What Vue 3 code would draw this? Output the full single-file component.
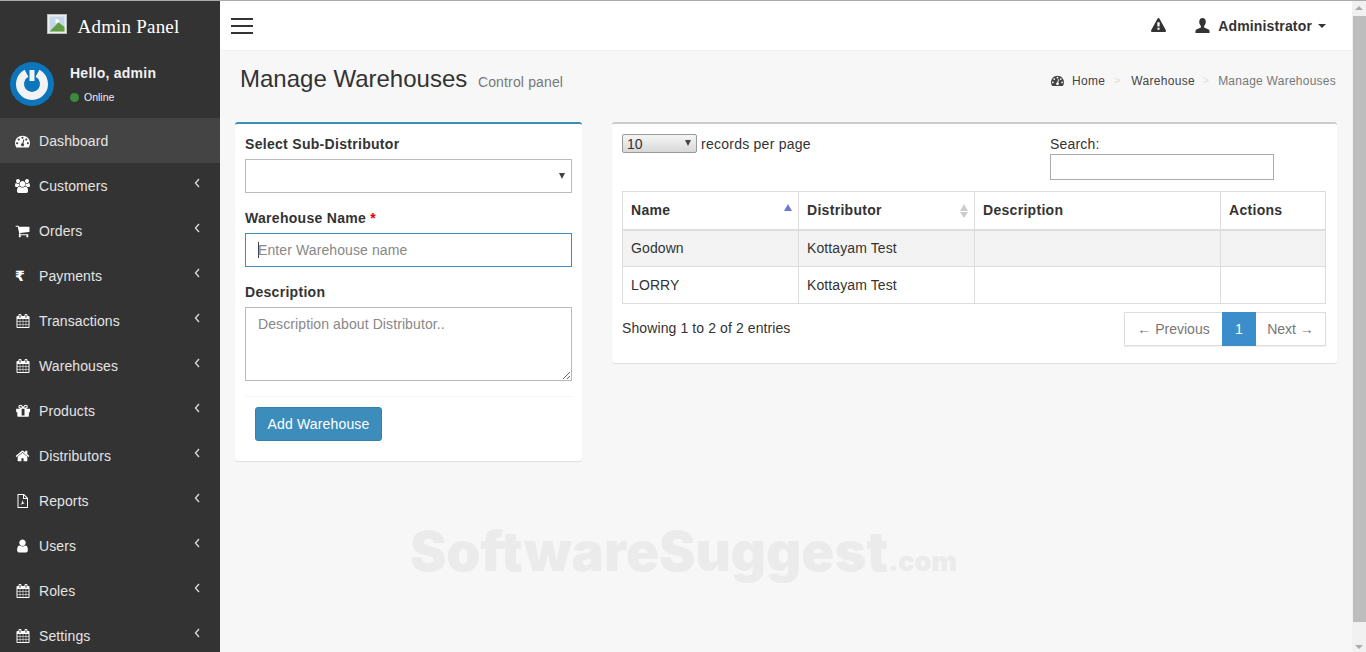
<template>
  <div class="page">
    <aside class="sidebar">
      <div class="brand">
        <svg class="broken-img" width="20" height="20" viewBox="0 0 20 20">
          <rect x="0.5" y="0.5" width="19" height="19" fill="#eee" stroke="#bbb" />
          <rect x="2.500" y="2.500" width="15" height="15" fill="#c5d6ea" />
          <path d="M2.500 17.500l9-9 6 4.500v4.500z" fill="#5f9e3d" />
          <path d="M3 7h6l-1-2h2l3 2-3 2H8l1-2z" fill="#fff" />
        </svg>
        <span class="brand-text">Admin Panel</span>
      </div>
      <div class="user-panel">
        <svg width="44" height="44" viewBox="0 0 44 44">
          <circle cx="22" cy="22" r="22" fill="#0b76bb" />
          <path d="M16.500 11.300a12 12 0 1 0 11 0" fill="none" stroke="#f2f2f2" stroke-width="8" />
          <path d="M22 8v11" stroke="#f2f2f2" stroke-width="5" />
        </svg>
        <div class="user-info">
          <div class="hello">Hello, admin</div>
          <div class="online"><i class="dot"></i>Online</div>
        </div>
      </div>
      <ul class="menu">
        <li v-for="item in menu" :key="item.label" :class="{ active: item.active }">
          <span v-if="item.icon === 'rupee'" class="rupee">₹</span>
          <svg v-else class="icon" :viewBox="icons[item.icon].box" width="14" height="14">
            <path :d="icons[item.icon].d" fill="#fff" />
          </svg>
          <span class="label">{{ item.label }}</span>
          <svg v-if="!item.active" class="angle" width="6" height="10" viewBox="0 0 6 10">
            <path d="M5 1L1.500 5 5 9" fill="none" stroke="#d8d8d8" stroke-width="1.400" />
          </svg>
        </li>
      </ul>
    </aside>

    <main class="main">
      <header class="topbar">
        <div class="burger"><i></i><i></i><i></i></div>
        <div class="top-right">
          <svg width="15" height="15" :viewBox="icons.warning.box">
            <path :d="icons.warning.d" fill="#333" />
          </svg>
          <div class="account">
            <svg width="15" height="15" viewBox="0 0 15 16">
              <path d="M7.500 0c2.200 0 3.500 1.800 3.500 4s-1 3.500-1.800 4.500v1.500l4.300 2c.8.400 1.500 1 1.500 2v2H0v-2c0-1 .7-1.600 1.500-2l4.300-2V8.500C5 7.500 4 6.200 4 4s1.300-4 3.500-4z" fill="#333" />
            </svg>
            <b>Administrator</b>
            <i class="caret"></i>
          </div>
        </div>
      </header>

      <div class="content-header">
        <h1>Manage Warehouses <small>Control panel</small></h1>
        <ol class="breadcrumb">
          <li class="home">
            <svg width="13" height="13" :viewBox="icons.dashboard.box">
              <path :d="icons.dashboard.d" fill="#444" />
            </svg>
            Home
          </li>
          <li class="sep">&gt;</li>
          <li class="middle">Warehouse</li>
          <li class="sep">&gt;</li>
          <li class="current">Manage Warehouses</li>
        </ol>
      </div>

      <section class="row">
        <div class="box box-form">
          <label class="field-label">Select Sub-Distributor</label>
          <div class="select-wrap">
            <select class="control"><option></option></select>
          </div>
          <label class="field-label">Warehouse Name <span class="req">*</span></label>
          <div class="input-wrap">
            <input class="control focused" type="text" placeholder="Enter Warehouse name" />
            <i class="text-caret"></i>
          </div>
          <label class="field-label">Description</label>
          <textarea class="control area" placeholder="Description about Distributor.."></textarea>
          <div class="box-footer">
            <button class="btn-add">Add Warehouse</button>
          </div>
        </div>

        <div class="box box-table">
          <div class="table-tools">
            <div class="per-page">
              <div class="select-wrap small-select">
                <select class="page-size"><option>10</option></select>
              </div>
              <span>records per page</span>
            </div>
            <label class="search">
              <span>Search:</span>
              <input type="text" />
            </label>
          </div>
          <table>
            <thead>
              <tr>
                <th class="c1">Name<i class="sort up"></i></th>
                <th class="c2">Distributor<i class="sort both"></i></th>
                <th class="c3">Description</th>
                <th class="c4">Actions</th>
              </tr>
            </thead>
            <tbody>
              <tr v-for="row in rows" :key="row.name">
                <td>{{ row.name }}</td>
                <td>{{ row.distributor }}</td>
                <td></td>
                <td></td>
              </tr>
            </tbody>
          </table>
          <div class="table-foot">
            <span>Showing 1 to 2 of 2 entries</span>
            <div class="pager">
              <a class="prev">← Previous</a>
              <a class="on">1</a>
              <a class="next">Next →</a>
            </div>
          </div>
        </div>
      </section>

      <div class="watermark">SoftwareSuggest<span>.com</span></div>
    </main>

    <div class="scrollbar">
      <i class="arrow top"></i>
      <div class="thumb"></div>
      <i class="arrow bottom"></i>
    </div>
  </div>
</template>

<script setup>
const calendar = 'calendar'

const menu = [
  { label: 'Dashboard', icon: 'dashboard', active: true },
  { label: 'Customers', icon: 'users' },
  { label: 'Orders', icon: 'cart' },
  { label: 'Payments', icon: 'rupee' },
  { label: 'Transactions', icon: calendar },
  { label: 'Warehouses', icon: calendar },
  { label: 'Products', icon: 'gift' },
  { label: 'Distributors', icon: 'home' },
  { label: 'Reports', icon: 'pdf' },
  { label: 'Users', icon: 'user' },
  { label: 'Roles', icon: calendar },
  { label: 'Settings', icon: calendar },
]

const rows = [
  { name: 'Godown', distributor: 'Kottayam Test' },
  { name: 'LORRY', distributor: 'Kottayam Test' },
]

const icons = {
  dashboard: {
    box: '0 128 1792 1536',
    d: 'M384 1152q0-53-37.5-90.5t-90.5-37.5-90.5 37.5-37.5 90.5 37.5 90.5 90.5 37.5 90.5-37.5 37.5-90.5zm192-448q0-53-37.5-90.5t-90.5-37.5-90.5 37.5-37.5 90.5 37.5 90.5 90.5 37.5 90.5-37.5 37.5-90.5zm428 481l101-382q6-26-7.5-48.5t-38.5-29.5-48 6.5-30 39.5l-101 382q-60 5-107 43.5t-63 98.5q-20 77 20 146t117 89 146-20 89-117q16-60-6-117t-72-91zm660-33q0-53-37.5-90.5t-90.5-37.5-90.5 37.5-37.5 90.5 37.5 90.5 90.5 37.5 90.5-37.5 37.5-90.5zm-640-640q0-53-37.5-90.5t-90.5-37.5-90.5 37.5-37.5 90.5 37.5 90.5 90.5 37.5 90.5-37.5 37.5-90.5zm448 192q0-53-37.5-90.5t-90.5-37.5-90.5 37.5-37.5 90.5 37.5 90.5 90.5 37.5 90.5-37.5 37.5-90.5zm320 448q0 261-141 483-19 29-54 29h-1402q-35 0-54-29-141-221-141-483 0-182 71-348t191-286 286-191 348-71 348 71 286 191 191 286 71 348z',
  },
  users: {
    box: '0 0 1920 1792',
    d: 'M593 896q-162 5-265 128h-134q-82 0-138-40.5t-56-118.5q0-353 124-353 6 0 43.5 21t97.5 42.5 119 21.5q67 0 133-23-5 37-5 66 0 139 81 256zm1071 637q0 120-73 189.5t-194 69.5h-874q-121 0-194-69.5t-73-189.5q0-53 3.5-103.5t14-109 26.5-108.5 43-97.5 62-81 85.5-53.5 111.5-20q10 0 43 21.5t73 48 107 48 135 21.5 135-21.5 107-48 73-48 43-21.5q61 0 111.5 20t85.5 53.5 62 81 43 97.5 26.5 108.5 14 109 3.5 103.5zm-1024-1277q0 106-75 181t-181 75-181-75-75-181 75-181 181-75 181 75 75 181zm704 384q0 159-112.5 271.5t-271.5 112.5-271.5-112.5-112.5-271.5 112.5-271.5 271.5-112.5 271.5 112.5 112.5 271.5zm576 225q0 78-56 118.5t-138 40.5h-134q-103-123-265-128 81-117 81-256 0-29-5-66 66 23 133 23 59 0 119-21.5t97.5-42.5 43.5-21q124 0 124 353zm-128-609q0 106-75 181t-181 75-181-75-75-181 75-181 181-75 181 75 75 181z',
  },
  cart: {
    box: '0 128 1792 1536',
    d: 'M704 1536q0 52-38 90t-90 38-90-38-38-90 38-90 90-38 90 38 38 90zm896 0q0 52-38 90t-90 38-90-38-38-90 38-90 90-38 90 38 38 90zm128-1088v512q0 24-16.5 42.5t-40.5 21.5l-1044 122q13 60 13 70 0 16-24 64h920q26 0 45 19t19 45-19 45-45 19h-1024q-26 0-45-19t-19-45q0-11 8-31.5t16-36 21.5-40 15.5-29.5l-177-823h-204q-26 0-45-19t-19-45 19-45 45-19h256q16 0 28.5 6.5t19.5 15.5 13 24.5 8 26 5.5 29.5 4.5 26h1201q26 0 45 19t19 45z',
  },
  calendar: {
    box: '0 0 1664 1792',
    d: 'M192 1664h288v-288h-288v288zm352 0h320v-288h-320v288zm-352-352h288v-320h-288v320zm352 0h320v-320h-320v320zm-352-384h288v-288h-288v288zm736 736h320v-288h-320v288zm-384-736h320v-288h-320v288zm768 736h288v-288h-288v288zm-384-352h320v-320h-320v320zm-352-864v-288q0-13-9.5-22.5t-22.5-9.5h-64q-13 0-22.5 9.5t-9.5 22.5v288q0 13 9.5 22.5t22.5 9.5h64q13 0 22.5-9.5t9.5-22.5zm736 864h288v-320h-288v320zm-384-384h320v-288h-320v288zm384 0h288v-288h-288v288zm32-480v-288q0-13-9.5-22.5t-22.5-9.5h-64q-13 0-22.5 9.5t-9.5 22.5v288q0 13 9.5 22.5t22.5 9.5h64q13 0 22.5-9.5t9.5-22.5zm384-64v1280q0 52-38 90t-90 38h-1408q-52 0-90-38t-38-90v-1280q0-52 38-90t90-38h128v-96q0-66 47-113t113-47h64q66 0 113 47t47 113v96h384v-96q0-66 47-113t113-47h64q66 0 113 47t47 113v96h128q52 0 90 38t38 90z',
  },
  gift: {
    box: '0 128 1664 1536',
    d: 'M1056 1356v-716h-320v716q0 25 18 38.5t46 13.5h192q28 0 46-13.5t18-38.5zm-456-844h195l-126-161q-26-31-69-31-40 0-68 28t-28 68 28 68 68 28zm688-96q0-40-28-68t-68-28q-43 0-69 31l-125 161h194q40 0 68-28t28-68zm376 256v320q0 14-9 23t-23 9h-96v416q0 40-28 68t-68 28h-1088q-40 0-68-28t-28-68v-416h-96q-14 0-23-9t-9-23v-320q0-14 9-23t23-9h440q-93 0-158.5-65.5t-65.5-158.5 65.5-158.5 158.5-65.5q107 0 168 77l128 165 128-165q61-77 168-77 93 0 158.5 65.5t65.5 158.5-65.5 158.5-158.5 65.5h440q14 0 23 9t9 23z',
  },
  home: {
    box: '0 128 1792 1536',
    d: 'M1472 992v480q0 26-19 45t-45 19h-384v-384h-256v384h-384q-26 0-45-19t-19-45v-480q0-1 .5-3t.5-3l575-474 575 474q1 2 1 6zm223-69l-62 74q-8 9-21 11h-3q-13 0-21-7l-692-577-692 577q-12 8-24 7-13-2-21-11l-62-74q-8-10-7-23.5t11-21.5l719-599q32-26 76-26t76 26l244 204v-195q0-14 9-23t23-9h192q14 0 23 9t9 23v408l219 182q10 8 11 21.5t-7 23.5z',
  },
  pdf: {
    box: '1 0 12 14',
    d: 'M2 0h6.500L12.500 4v10H2zM3 1v12h8.500V5H7.500V1zM8.500 1.500V4H11zM4.500 11.500c1.200-1 2.200-3 2.500-5.500.4 2 1.200 3.200 2.700 3.600-1.700 0-3.500.6-5.200 1.900z',
  },
  user: {
    box: '0 128 1792 1536',
    d: 'M1536 1399q0 109-62.500 187t-150.500 78h-854q-88 0-150.500-78t-62.500-187q0-85 8.500-160.500t31.500-152 58.500-131 94-89 134.500-34.500q131 128 313 128t313-128q76 0 134.500 34.500t94 89 58.500 131 31.500 152 8.500 160.500zm-256-887q0 159-112.500 271.500t-271.500 112.500-271.500-112.500-112.500-271.500 112.500-271.500 271.500-112.500 271.500 112.500 112.500 271.500z',
  },
  warning: {
    box: '0 0 1792 1792',
    d: 'M1024 1375v-190q0-14-9.500-23.500t-22.500-9.500h-192q-13 0-22.500 9.500t-9.500 23.500v190q0 14 9.500 23.500t22.500 9.500h192q13 0 22.500-9.500t9.500-23.500zm-2-374l18-459q0-12-10-19-13-11-24-11h-220q-11 0-24 11-10 7-10 21l17 457q0 10 10 16.500t24 6.500h185q14 0 23.500-6.500t10.500-16.500zm-14-934l768 1408q35 63-2 126-17 29-46.500 46t-63.500 17h-1536q-34 0-63.500-17t-46.500-46q-37-63-2-126l768-1408q17-31 47-49t65-18 65 18 47 49z',
  },
}
</script>

<style>
html, body {
  margin: 0;
  height: 100%;
  overflow: hidden;
}
</style>

<style scoped>
.page {
  display: flex;
  width: 1366px;
  height: 652px;
  overflow: hidden;
  border-top: 1px solid #aaa;
  box-sizing: border-box;
  background: #f7f7f7;
  color: #333;
  font-family: "Liberation Sans", Arial, sans-serif;
  font-size: 14px;
  letter-spacing: 0.1px;
}

/* sidebar */
.sidebar {
  width: 220px;
  flex: none;
  background: #333;
  color: #eee;
}

.brand {
  height: 50px;
  display: flex;
  align-items: center;
  justify-content: center;
  gap: 11px;
  padding-left: 6px;
  font-family: "Liberation Serif", serif;
  font-size: 19px;
  letter-spacing: 0.2px;
  color: #fff;
  box-sizing: border-box;
}

.brand-text {
  padding-top: 2px;
}

.broken-img {
  margin-top: -4px;
}

.user-panel {
  height: 67px;
  display: flex;
  gap: 16px;
  padding: 11px 0 0 10px;
  box-sizing: border-box;
}

.hello {
  font-weight: 700;
  margin-top: 3px;
  color: #f2f2f2;
  letter-spacing: 0.25px;
}

.online {
  display: flex;
  align-items: center;
  gap: 5px;
  margin-top: 10px;
  font-size: 10.500px;
  letter-spacing: 0;
}

.dot {
  width: 9px;
  height: 9px;
  border-radius: 50%;
  background: #3c8a3c;
}

.menu {
  list-style: none;
  margin: 0;
  padding: 0;
}

.menu li {
  height: 45px;
  display: flex;
  align-items: center;
  padding-left: 15px;
  box-sizing: border-box;
  color: #e4e4e4;
}

.menu li.active {
  background: #444;
}

.icon {
  width: 15px;
  flex: none;
}

.rupee {
  width: 15px;
  flex: none;
  font-family: "DejaVu Sans", sans-serif;
  font-size: 14px;
  font-weight: 700;
  color: #fff;
}

.label {
  margin-left: 9px;
}

.angle {
  margin-left: auto;
  margin-right: 20px;
  margin-top: -6px;
}

/* main */
.main {
  position: relative;
  flex: 1;
  min-width: 0;
}

.topbar {
  height: 50px;
  box-sizing: border-box;
  background: #fff;
  border-bottom: 1px solid #f0f0f0;
  display: flex;
  align-items: center;
  justify-content: space-between;
  padding: 0 26px 0 11px;
}

.burger {
  display: flex;
  flex-direction: column;
  gap: 5px;
}

.burger i {
  display: block;
  width: 22px;
  height: 2px;
  background: #333;
}

.top-right {
  display: flex;
  align-items: center;
  gap: 29px;
}

.account {
  display: flex;
  align-items: center;
  gap: 8px;
  font-weight: 700;
  letter-spacing: 0.15px;
}

.caret {
  border: 4px solid transparent;
  border-top-color: #333;
  border-bottom: 0;
  margin-left: -2px;
}

.content-header {
  display: flex;
  align-items: center;
  justify-content: space-between;
  height: 56px;
  padding: 0 16px 0 20px;
  box-sizing: border-box;
}

h1 {
  margin: 0;
  font-size: 24px;
  font-weight: 400;
  letter-spacing: 0;
}

small {
  font-size: 14px;
  color: #777;
  margin-left: 4px;
  letter-spacing: 0.15px;
}

.breadcrumb {
  display: flex;
  align-items: center;
  gap: 8px;
  list-style: none;
  margin: 3px 0 0;
  padding: 0;
  font-size: 12px;
  letter-spacing: 0.3px;
  color: #444;
}

.breadcrumb svg {
  vertical-align: -2px;
  margin-right: 4px;
}

.home {
  margin-right: 1px;
}

.sep {
  color: #ddd;
  font-size: 10px;
}

.middle {
  margin-left: 3px;
}

.current {
  margin-left: 1px;
  color: #777;
  letter-spacing: 0.25px;
}

.row {
  display: grid;
  grid-template-columns: 347px 725px;
  gap: 30px;
  align-items: start;
  padding: 15px 0 0 15px;
}

.box {
  background: #fff;
  border-radius: 3px;
  box-shadow: 0 1px 1px rgba(0, 0, 0, 0.1);
  box-sizing: border-box;
}

.box-form {
  height: 339px;
  border-top: 2px solid #3c8dbc;
  padding: 12px 10px 0;
}

.field-label {
  display: block;
  font-weight: 700;
  line-height: 16px;
  margin-bottom: 7px;
  letter-spacing: 0.3px;
}

.req {
  color: #d00;
}

.control {
  display: block;
  width: 100%;
  height: 34px;
  box-sizing: border-box;
  border: 1px solid #bbb;
  background: #fff;
  padding: 0 12px;
  font: inherit;
  letter-spacing: inherit;
  color: #555;
  margin-bottom: 17px;
  outline: none;
  appearance: none;
}

.control::placeholder {
  color: #888;
}

.select-wrap {
  position: relative;
}

.select-wrap::after {
  content: "";
  position: absolute;
  right: 7px;
  top: 14px;
  border: 3.500px solid transparent;
  border-top: 6px solid #444;
  border-bottom: 0;
  pointer-events: none;
}

.small-select::after {
  right: 6px;
  top: 6px;
}

.input-wrap {
  position: relative;
}

.focused {
  border-color: #3c8dbc;
}

.text-caret {
  position: absolute;
  left: 13px;
  top: 9px;
  width: 1px;
  height: 16px;
  background: #444;
}

.area {
  height: 74px;
  padding-top: 8px;
  margin-bottom: 15px;
  resize: vertical;
}

.box-footer {
  border-top: 1px solid #f4f4f4;
  padding: 10px;
}

.btn-add {
  display: block;
  height: 34px;
  width: 127px;
  border: 1px solid #367fa9;
  border-radius: 3px;
  background: #3c8dbc;
  color: #fff;
  font: inherit;
  letter-spacing: 0.15px;
}

.box-table {
  height: 241px;
  border-top: 2px solid #ccc;
  padding: 10px 11px 10px 10px;
}

.table-tools {
  display: flex;
  justify-content: space-between;
  height: 57px;
}

.per-page {
  display: flex;
  align-items: flex-start;
  gap: 4px;
  line-height: 20px;
  letter-spacing: 0.25px;
}

.page-size {
  display: block;
  width: 75px;
  height: 19px;
  font: 14px "Liberation Sans", sans-serif;
  color: #333;
  background: linear-gradient(#f6f6f6, #d8d8d8);
  border: 1px solid #999;
  border-radius: 2px;
  padding: 0 4px;
  appearance: none;
}

.search {
  display: flex;
  flex-direction: column;
  width: 276px;
  line-height: 20px;
  letter-spacing: 0.2px;
}

.search input {
  width: 224px;
  height: 26px;
  box-sizing: border-box;
  border: 1px solid #aaa;
  background: #fff;
  outline: none;
}

table {
  width: 703px;
  table-layout: fixed;
  border-collapse: collapse;
  border: 1px solid #ddd;
}

th, td {
  box-sizing: border-box;
  border: 1px solid #ddd;
  padding: 0 8px;
  text-align: left;
  position: relative;
}

th {
  height: 38px;
  border-bottom-width: 2px;
  letter-spacing: 0.3px;
}

td {
  height: 37px;
}

tbody tr:nth-child(odd) {
  background: #f3f3f3;
}

.c1, .c2 { width: 176px; }
.c3 { width: 246px; }
.c4 { width: 105px; }

.sort {
  position: absolute;
  right: 6px;
  top: 12px;
  border: 4px solid transparent;
  border-top: 0;
  border-bottom: 7px solid #6a78d8;
}

.sort.both {
  border-bottom-color: #ccc;
}

.sort.both::after {
  content: "";
  position: absolute;
  left: -4px;
  top: 8px;
  border: 4px solid transparent;
  border-bottom: 0;
  border-top: 6px solid #ccc;
}

.table-foot {
  display: flex;
  justify-content: space-between;
  align-items: flex-start;
  margin-top: 8px;
  line-height: 33px;
}

.pager {
  display: flex;
  height: 34px;
  border: 1px solid #ddd;
  box-sizing: border-box;
  box-shadow: 0 1px 1px rgba(0, 0, 0, 0.06);
  color: #777;
  line-height: 32px;
  letter-spacing: 0;
}

.pager a {
  box-sizing: border-box;
  text-align: center;
}

.pager a.prev {
  width: 97px;
}

.pager a.next {
  width: 69px;
}

.pager a.on {
  width: 34px;
  background: #3c8dcc;
  color: #fff;
  margin: -1px 0;
  line-height: 34px;
}

.watermark {
  position: absolute;
  left: 190px;
  top: 517px;
  font-family: Inter, sans-serif;
  font-size: 54.500px;
  font-weight: 900;
  color: #ebebeb;
  letter-spacing: 0;
  white-space: nowrap;
}

.watermark span {
  font-size: 27px;
}

/* fake page scrollbar */
.scrollbar {
  width: 14px;
  flex: none;
  background: #f1f1f1;
  display: flex;
  flex-direction: column;
  align-items: center;
}

.thumb {
  width: 13px;
  height: 606px;
  margin: 3px 0 auto;
  background: #bdbdbd;
}

.arrow {
  border: 4px solid transparent;
  margin: 5px 0 3px;
}

.arrow.top {
  border-top: 0;
  border-bottom: 4px solid #aaa;
}

.arrow.bottom {
  border-bottom: 0;
  border-top: 4px solid #aaa;
}
</style>
